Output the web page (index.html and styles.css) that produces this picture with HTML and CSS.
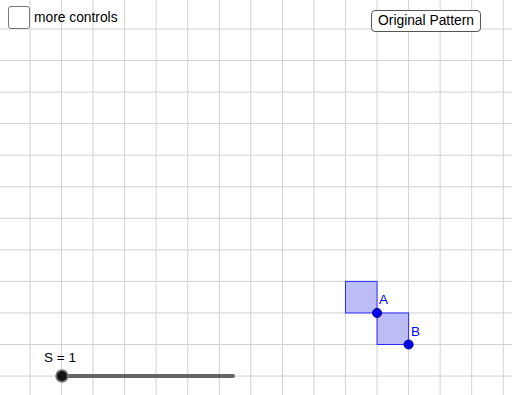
FILE: index.html
```html
<!DOCTYPE html>
<html>
<head>
<meta charset="utf-8">
<link rel="stylesheet" href="styles.css">
</head>
<body>
<div class="applet">
  <svg class="canvas" width="512" height="395" viewBox="0 0 512 395">
    <g class="grid">
      <line x1="30" y1="0" x2="30" y2="395"/>
      <line x1="61.55" y1="0" x2="61.55" y2="395"/>
      <line x1="93.1" y1="0" x2="93.1" y2="395"/>
      <line x1="124.65" y1="0" x2="124.65" y2="395"/>
      <line x1="156.2" y1="0" x2="156.2" y2="395"/>
      <line x1="187.75" y1="0" x2="187.75" y2="395"/>
      <line x1="219.3" y1="0" x2="219.3" y2="395"/>
      <line x1="250.85" y1="0" x2="250.85" y2="395"/>
      <line x1="282.4" y1="0" x2="282.4" y2="395"/>
      <line x1="313.95" y1="0" x2="313.95" y2="395"/>
      <line x1="345.5" y1="0" x2="345.5" y2="395"/>
      <line x1="377.05" y1="0" x2="377.05" y2="395"/>
      <line x1="408.6" y1="0" x2="408.6" y2="395"/>
      <line x1="440.15" y1="0" x2="440.15" y2="395"/>
      <line x1="471.7" y1="0" x2="471.7" y2="395"/>
      <line x1="503.25" y1="0" x2="503.25" y2="395"/>
      <line x1="0" y1="29" x2="512" y2="29"/>
      <line x1="0" y1="60.55" x2="512" y2="60.55"/>
      <line x1="0" y1="92.1" x2="512" y2="92.1"/>
      <line x1="0" y1="123.65" x2="512" y2="123.65"/>
      <line x1="0" y1="155.2" x2="512" y2="155.2"/>
      <line x1="0" y1="186.75" x2="512" y2="186.75"/>
      <line x1="0" y1="218.3" x2="512" y2="218.3"/>
      <line x1="0" y1="249.85" x2="512" y2="249.85"/>
      <line x1="0" y1="281.4" x2="512" y2="281.4"/>
      <line x1="0" y1="312.95" x2="512" y2="312.95"/>
      <line x1="0" y1="344.5" x2="512" y2="344.5"/>
      <line x1="0" y1="376.05" x2="512" y2="376.05"/>
    </g>
    <rect class="poly" x="345.5" y="281.4" width="31.55" height="31.55"/>
    <rect class="poly" x="377.05" y="312.95" width="31.55" height="31.55"/>
    <circle class="pt" cx="377.05" cy="312.95" r="4.6"/>
    <circle class="pt" cx="408.6" cy="344.5" r="4.6"/>
    <text class="lbl" x="379" y="304">A</text>
    <text class="lbl" x="411" y="336">B</text>
    <text class="slabel" x="44" y="362">S = 1</text>
    <line class="track" x1="62" y1="376" x2="233" y2="376"/>
    <circle class="knob" cx="62" cy="376" r="5.8"/>
  </svg>
  <label class="check">
    <span class="box"></span>
    <span class="check-text">more controls</span>
  </label>
  <button class="btn">Original Pattern</button>
</div>
</body>
</html>
```
FILE: styles.css
```css
html, body {
  margin: 0;
  padding: 0;
  background: #fff;
}
.applet {
  position: relative;
  width: 512px;
  height: 395px;
  overflow: hidden;
  font-family: "Liberation Sans", Arial, sans-serif;
}
.canvas {
  display: block;
}
.grid line {
  stroke: #d2d2d2;
  stroke-width: 1;
}
.poly {
  fill: #bcbcf6;
  stroke: #2b2bff;
  stroke-width: 1;
}
.pt {
  fill: #0000ee;
  stroke: #00006a;
  stroke-width: 0.8;
}
.lbl {
  fill: #0000ff;
  font-family: "Liberation Sans", Arial, sans-serif;
  font-size: 13.5px;
}
.slabel {
  fill: #000;
  font-family: "Liberation Sans", Arial, sans-serif;
  font-size: 13.5px;
}
.track {
  stroke: #666;
  stroke-width: 4;
  stroke-linecap: round;
}
.knob {
  fill: #111;
  stroke: #777;
  stroke-width: 1.8;
}
.check {
  position: absolute;
  left: 8px;
  top: 6px;
  display: flex;
  align-items: center;
  gap: 4px;
}
.box {
  width: 20px;
  height: 21px;
  border: 1px solid #777;
  border-radius: 3px;
  background: #fff;
}
.check-text {
  font-size: 13.8px;
  color: #000;
  line-height: 16px;
  padding-top: 1px;
}
.btn {
  position: absolute;
  left: 371px;
  top: 10px;
  width: 110px;
  height: 22px;
  padding: 0;
  border: 1px solid #555;
  border-radius: 4px;
  background: #fff;
  font-family: "Liberation Sans", Arial, sans-serif;
  font-size: 13.8px;
  color: #000;
  line-height: 20px;
  text-align: center;
}
```
